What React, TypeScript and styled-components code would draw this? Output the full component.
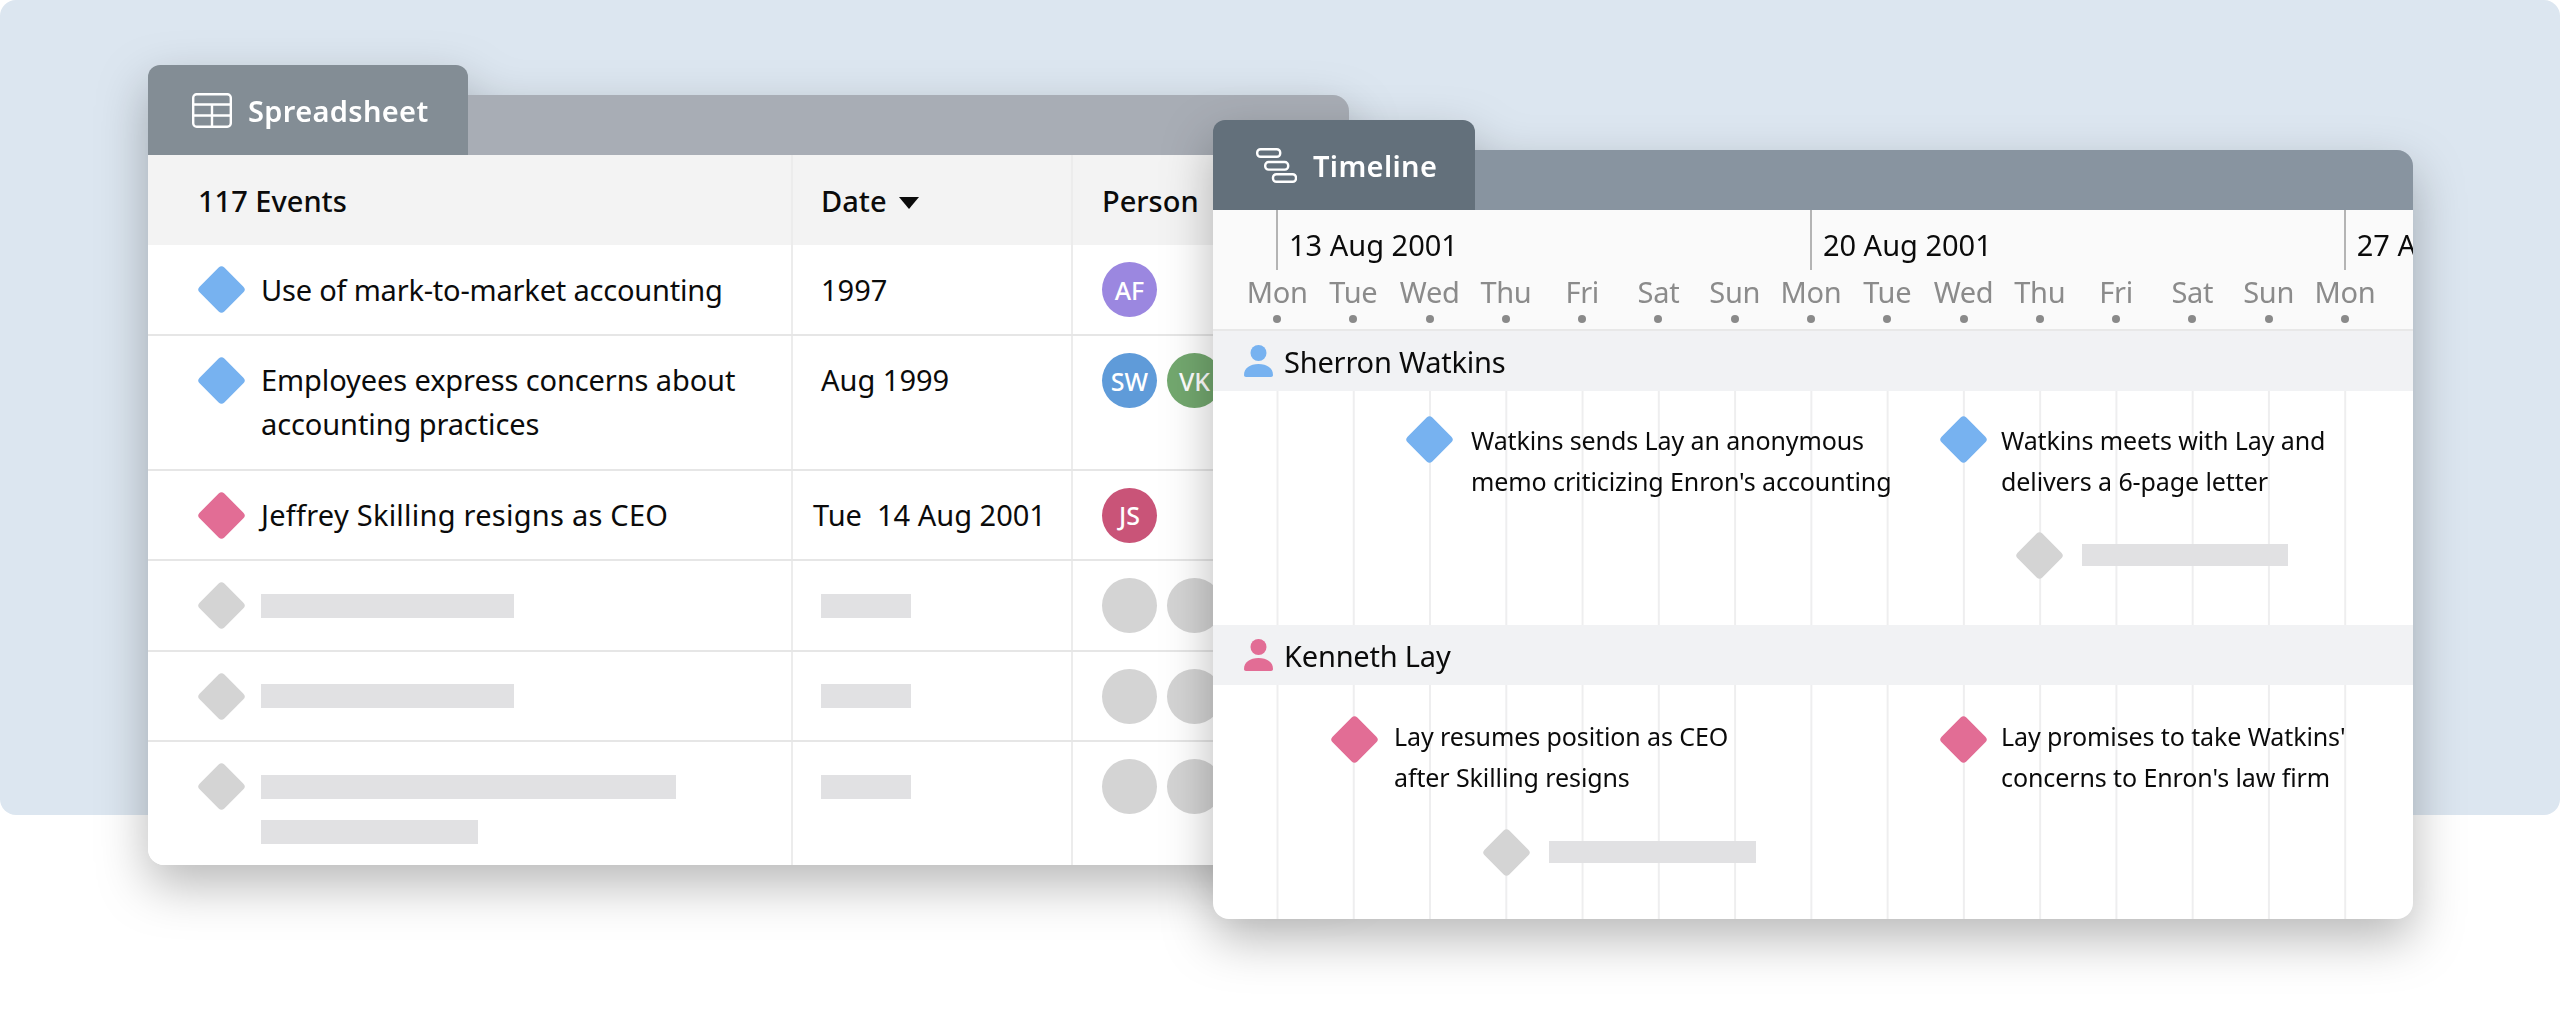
import React from "react";
import styled, { createGlobalStyle } from "styled-components";

const Global = createGlobalStyle`
  html, body { margin: 0; padding: 0; background: #fff; overflow: hidden; }
  body { font-family: "Noto Sans", "Open Sans", sans-serif; color: #0b0b0b; }
`;

const Stage = styled.div`
  position: relative;
  width: 2560px;
  height: 1010px;
  overflow: hidden;
`;
const Backdrop = styled.div`
  height: 815px;
  background: #dce6f0;
  border-radius: 16px;
`;
const Win = styled.section<{ $x: number; $y: number; $w: number; $h: number }>`
  position: absolute;
  left: ${(p) => p.$x}px;
  top: ${(p) => p.$y}px;
  width: ${(p) => p.$w}px;
  height: ${(p) => p.$h}px;
  display: flex;
  flex-direction: column;
  filter: drop-shadow(0 20px 25px rgba(0, 0, 0, 0.28));
`;
const TitleRow = styled.header`
  height: 90px;
  flex: none;
  display: flex;
  align-items: flex-end;
`;
const Tab = styled.div<{ $w: number; $bg: string; $pad: number; $gap: number }>`
  width: ${(p) => p.$w}px;
  height: 90px;
  box-sizing: border-box;
  padding-left: ${(p) => p.$pad}px;
  background: ${(p) => p.$bg};
  border-radius: 12px 12px 0 0;
  display: flex;
  align-items: center;
  gap: ${(p) => p.$gap}px;
  color: #fff;
  font-size: 29px;
  font-weight: 600;
  letter-spacing: 0.35px;
`;
const TitleFill = styled.div<{ $bg: string }>`
  flex: 1;
  height: 60px;
  background: ${(p) => p.$bg};
  border-radius: 0 16px 0 0;
`;
const Sheet = styled.div`
  flex: 1;
  background: #fff;
  border-radius: 0 0 16px 16px;
  overflow: hidden;
`;

/* spreadsheet */
const Row = styled.div<{ $h: number; $head?: boolean; $last?: boolean }>`
  display: grid;
  grid-template-columns: 645px 280px 1fr;
  height: ${(p) => p.$h}px;
  box-sizing: border-box;
  background: ${(p) => (p.$head ? "#f3f3f3" : "#fff")};
  border-bottom: ${(p) => (p.$head || p.$last ? "0" : "2px solid #e6e6e6")};
  font-size: 29px;
  font-weight: ${(p) => (p.$head ? 500 : 400)};
`;
const Cell = styled.div<{ $pad: number; $border?: boolean; $top?: number }>`
  box-sizing: border-box;
  padding: ${(p) => p.$top || 0}px 0 0 ${(p) => p.$pad}px;
  border-right: ${(p) => (p.$border ? "2px solid #ececec" : "0")};
  display: flex;
  align-items: ${(p) => (p.$top ? "flex-start" : "center")};
  min-width: 0;
`;
const NameCell = styled(Cell)`
  gap: 17px;
`;
const Diamond = styled.span<{ $c: string }>`
  flex: none;
  width: 46px;
  height: 46px;
  display: flex;
  align-items: center;
  justify-content: center;
  &::before {
    content: "";
    width: 35px;
    height: 35px;
    border-radius: 4px;
    background: ${(p) => p.$c};
    transform: rotate(45deg);
  }
`;
const Lines = styled.div<{ $ls?: number; $top?: number }>`
  line-height: 44px;
  letter-spacing: ${(p) => p.$ls ?? -0.2}px;
  padding-top: ${(p) => p.$top || 0}px;
`;
const DateText = styled.div<{ $shift?: number }>`
  line-height: 44px;
  white-space: pre;
  margin-left: ${(p) => p.$shift || 0}px;
`;
const Caret = styled.span`
  display: inline-block;
  width: 0;
  height: 0;
  margin-left: 12px;
  vertical-align: 3px;
  border-left: 10px solid transparent;
  border-right: 10px solid transparent;
  border-top: 12px solid #0b0b0b;
`;
const Avatars = styled.div`
  display: flex;
  gap: 10px;
`;
const Avatar = styled.span<{ $c: string }>`
  flex: none;
  width: 55px;
  height: 55px;
  border-radius: 50%;
  background: ${(p) => p.$c};
  color: #fff;
  font-size: 25px;
  font-weight: 500;
  display: flex;
  align-items: center;
  justify-content: center;
`;
const Bars = styled.div`
  display: flex;
  flex-direction: column;
  gap: 21px;
  padding-top: 12px;
`;
const Bar = styled.div<{ $w: number; $h?: number }>`
  width: ${(p) => p.$w}px;
  height: ${(p) => p.$h || 24}px;
  background: #e1e1e3;
`;

/* timeline */
const WeekRow = styled.div`
  height: 60px;
  background: #fafafa;
  display: flex;
  padding-left: 63px;
  font-size: 29px;
  white-space: nowrap;
`;
const Week = styled.div`
  flex: none;
  width: 533.9px;
  box-sizing: border-box;
  border-left: 2px solid #b4b4b4;
  padding: 13px 0 0 11px;
  line-height: 44px;
`;
const DayRow = styled.div`
  height: 61px;
  box-sizing: border-box;
  background: #fafafa;
  border-bottom: 2px solid #e8e8e8;
  display: flex;
  padding-left: 26px;
`;
const Day = styled.div`
  flex: none;
  width: 76.27px;
  display: flex;
  flex-direction: column;
  align-items: center;
  color: #8b8b8b;
  font-size: 29px;
  line-height: 44px;
  letter-spacing: -0.3px;
  white-space: nowrap;
`;
const Dot = styled.span`
  width: 8px;
  height: 8px;
  margin-top: 1px;
  border-radius: 50%;
  background: #8a8a8a;
`;
const LaneHead = styled.div`
  height: 60px;
  background: #f1f2f4;
  display: flex;
  align-items: center;
  gap: 11px;
  padding-left: 31px;
  font-size: 29px;
  letter-spacing: -0.2px;
`;
const LaneBody = styled.div`
  position: relative;
  height: 234px;
  background-image: linear-gradient(90deg, #eeeeef 1.5px, transparent 1.5px);
  background-size: 76.27px 100%;
  background-position: 63.5px 0;
`;
const Event = styled.div<{ $x: number; $y: number; $gap: number }>`
  position: absolute;
  left: ${(p) => p.$x}px;
  top: ${(p) => p.$y}px;
  display: flex;
  gap: ${(p) => p.$gap}px;
  font-size: 25px;
  line-height: 41px;
  white-space: nowrap;
  letter-spacing: -0.1px;
`;
const EventText = styled.div<{ $top: number }>`
  padding-top: ${(p) => p.$top}px;
`;
const Ghost = styled.div<{ $x: number; $y: number }>`
  position: absolute;
  left: ${(p) => p.$x}px;
  top: ${(p) => p.$y}px;
  display: flex;
  align-items: center;
  gap: 20px;
`;

const TableIcon = () => (
  <svg width="40" height="35" viewBox="0 0 40 35" fill="none" stroke="#fff" strokeWidth="2.4">
    <rect x="1.2" y="1.2" width="37.6" height="32.6" rx="3.5" />
    <path d="M1.2 11.5H38.8M1.2 22.5H38.8M20 11.5V33.8" />
  </svg>
);
const GanttIcon = () => (
  <svg width="41" height="35" viewBox="0 0 41 35" fill="none" stroke="#fff" strokeWidth="2.4">
    <rect x="1.2" y="1.2" width="23" height="7.6" rx="3.4" />
    <rect x="9.2" y="14" width="23" height="7.6" rx="3.4" />
    <rect x="17" y="26.2" width="23" height="7.6" rx="3.4" />
  </svg>
);
const PersonIcon = ({ c }: { c: string }) => (
  <svg width="29" height="32" viewBox="0 0 29 32" fill={c}>
    <circle cx="14.5" cy="8" r="8" />
    <path d="M0 30C0 23 6 19 14.5 19S29 23 29 30C29 31.2 28.2 32 27 32H2C.8 32 0 31.2 0 30Z" />
  </svg>
);

const BLUE = "#77b2f0";
const PINK = "#e26d95";
const GREY = "#d4d4d4";
const DAYS = ["Mon", "Tue", "Wed", "Thu", "Fri", "Sat", "Sun"];
const ALL_DAYS = [...DAYS, ...DAYS, "Mon"];

const GhostAvatars = () => (
  <Avatars>
    <Avatar $c={GREY} />
    <Avatar $c={GREY} />
  </Avatars>
);

export default function App() {
  return (
    <Stage>
      <Global />
      <Backdrop />
      <Win $x={148} $y={65} $w={1201} $h={800}>
        <TitleRow>
          <Tab $w={320} $bg="#838d95" $pad={44} $gap={16}>
            <TableIcon />
            Spreadsheet
          </Tab>
          <TitleFill $bg="#a8adb5" />
        </TitleRow>
        <Sheet>
          <Row $h={90} $head>
            <Cell $pad={50} $border>117 Events</Cell>
            <Cell $pad={28} $border>
              <span>Date<Caret /></span>
            </Cell>
            <Cell $pad={29}>Person</Cell>
          </Row>
          <Row $h={91}>
            <NameCell $pad={50} $border>
              <Diamond $c={BLUE} />
              <Lines>Use of mark-to-market accounting</Lines>
            </NameCell>
            <Cell $pad={28} $border><DateText>1997</DateText></Cell>
            <Cell $pad={29}>
              <Avatars><Avatar $c="#9b87e0">AF</Avatar></Avatars>
            </Cell>
          </Row>
          <Row $h={135}>
            <NameCell $pad={50} $border $top={21}>
              <Diamond $c={BLUE} />
              <Lines $ls={-0.1} $top={1}>Employees express concerns about<br />accounting practices</Lines>
            </NameCell>
            <Cell $pad={28} $border $top={22}><DateText>Aug 1999</DateText></Cell>
            <Cell $pad={29} $top={17}>
              <Avatars>
                <Avatar $c="#5f9bd9">SW</Avatar>
                <Avatar $c="#73a86f">VK</Avatar>
              </Avatars>
            </Cell>
          </Row>
          <Row $h={90}>
            <NameCell $pad={50} $border>
              <Diamond $c={PINK} />
              <Lines $ls={0.25}>Jeffrey Skilling resigns as CEO</Lines>
            </NameCell>
            <Cell $pad={28} $border><DateText $shift={-8}>{"Tue  14 Aug 2001"}</DateText></Cell>
            <Cell $pad={29}>
              <Avatars><Avatar $c="#c95478">JS</Avatar></Avatars>
            </Cell>
          </Row>
          {[91, 90].map((h) => (
            <Row $h={h} key={h}>
              <NameCell $pad={50} $border>
                <Diamond $c={GREY} />
                <Bar $w={253} />
              </NameCell>
              <Cell $pad={28} $border><Bar $w={90} /></Cell>
              <Cell $pad={29}><GhostAvatars /></Cell>
            </Row>
          ))}
          <Row $h={123} $last>
            <NameCell $pad={50} $border $top={21}>
              <Diamond $c={GREY} />
              <Bars>
                <Bar $w={415} />
                <Bar $w={217} />
              </Bars>
            </NameCell>
            <Cell $pad={28} $border $top={21}>
              <Bars><Bar $w={90} /></Bars>
            </Cell>
            <Cell $pad={29} $top={17}><GhostAvatars /></Cell>
          </Row>
        </Sheet>
      </Win>

      <Win $x={1213} $y={120} $w={1200} $h={799}>
        <TitleRow>
          <Tab $w={262} $bg="#63707b" $pad={43} $gap={16}>
            <GanttIcon />
            Timeline
          </Tab>
          <TitleFill $bg="#8894a0" />
        </TitleRow>
        <Sheet>
          <WeekRow>
            <Week>13 Aug 2001</Week>
            <Week>20 Aug 2001</Week>
            <Week>27 Aug 2001</Week>
          </WeekRow>
          <DayRow>
            {ALL_DAYS.map((d, i) => (
              <Day key={i}>
                {d}
                <Dot />
              </Day>
            ))}
          </DayRow>
          <LaneHead>
            <PersonIcon c={BLUE} />
            Sherron Watkins
          </LaneHead>
          <LaneBody>
            <Event $x={193} $y={25} $gap={19}>
              <Diamond $c={BLUE} />
              <EventText $top={4}>Watkins sends Lay an anonymous<br />memo criticizing Enron's accounting</EventText>
            </Event>
            <Event $x={727} $y={25} $gap={15}>
              <Diamond $c={BLUE} />
              <EventText $top={4}>Watkins meets with Lay and<br />delivers a 6-page letter</EventText>
            </Event>
            <Ghost $x={803} $y={141}>
              <Diamond $c={GREY} />
              <Bar $w={206} $h={22} />
            </Ghost>
          </LaneBody>
          <LaneHead>
            <PersonIcon c={PINK} />
            Kenneth Lay
          </LaneHead>
          <LaneBody>
            <Event $x={118} $y={31} $gap={17}>
              <Diamond $c={PINK} />
              <EventText $top={0}>Lay resumes position as CEO<br />after Skilling resigns</EventText>
            </Event>
            <Event $x={727} $y={31} $gap={15}>
              <Diamond $c={PINK} />
              <EventText $top={0}>Lay promises to take Watkins'<br />concerns to Enron's law firm</EventText>
            </Event>
            <Ghost $x={270} $y={144}>
              <Diamond $c={GREY} />
              <Bar $w={207} $h={22} />
            </Ghost>
          </LaneBody>
        </Sheet>
      </Win>
    </Stage>
  );
}
